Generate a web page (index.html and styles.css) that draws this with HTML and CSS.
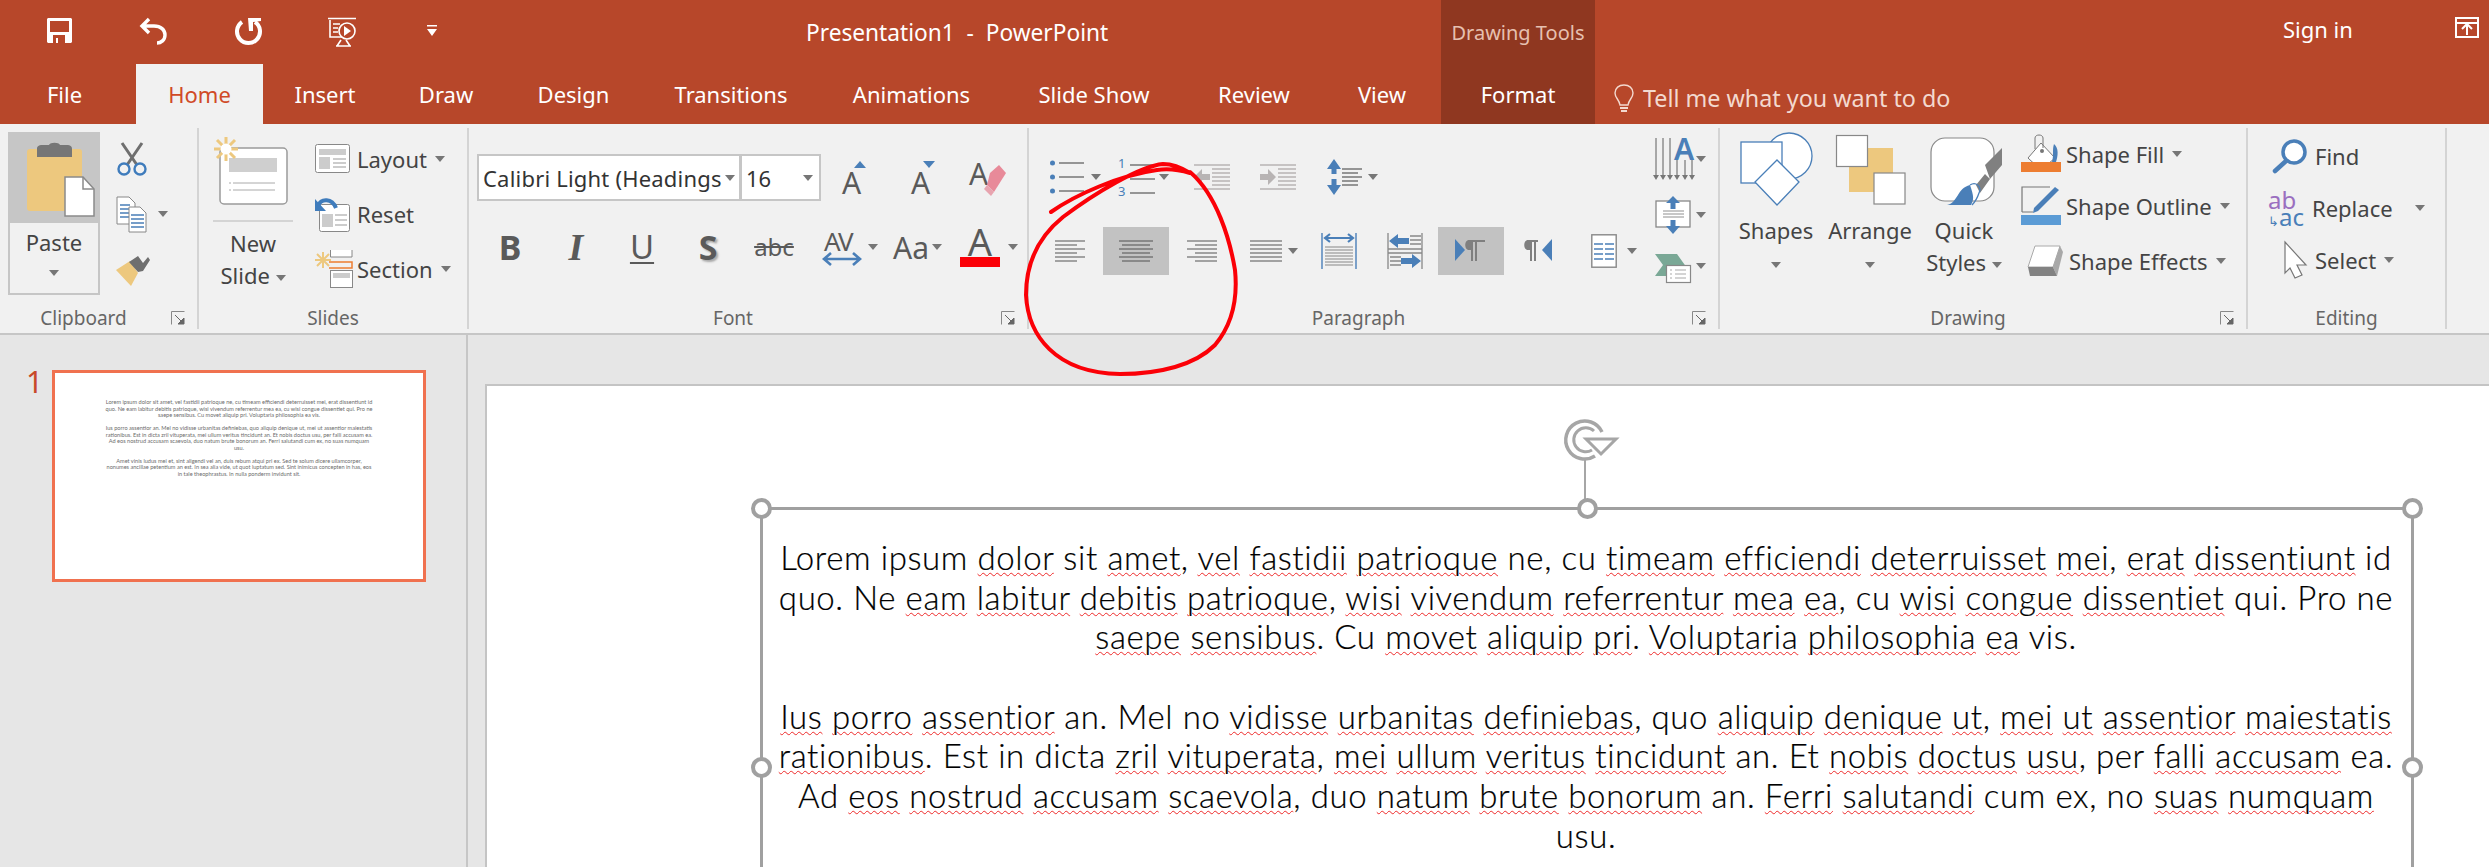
FILE: index.html
```html
<!DOCTYPE html>
<html>
<head>
  <title>Presentation1 - PowerPoint</title>
  <meta charset="UTF-8">
  <link rel="stylesheet" href="styles.css">
</head>
<body>
  <header class="titlebar">
    <div class="qat">
      <svg class="qat-save" width="25" height="26" viewBox="0 0 25 26"><path fill="#fff" fill-rule="evenodd" d="M1 1H24L25 2V25L24 26H1L0 25V2Z M3 4V15H22V4Z M6 18V26H9V21H11V26H18V18Z"/></svg>
      <svg class="qat-undo" width="28" height="28" viewBox="0 0 28 28"><path fill="none" stroke="#fff" stroke-width="3.4" d="M10 2L3 9L10 16M3 9H15C22 9 26 13 26 18C26 23 22 26 18 26"/></svg>
      <svg class="qat-redo" width="28" height="28" viewBox="0 0 28 28"><path fill="none" stroke="#fff" stroke-width="4" d="M8 5A11.500 11.500 0 1 0 21 5"/><path fill="#fff" d="M14 1H27V4L19 5V14H15Z"/></svg>
      <svg class="qat-show" width="30" height="30" viewBox="0 0 30 30"><g fill="none" stroke="#fff" stroke-width="1.6"><path d="M1 1.5H29M3 3V20H15M6 7H13M6 11H11M6 15H11"/><circle cx="20" cy="14" r="8"/><path d="M9 29H24M14 23L10 29M19 23L23 29"/></g><path fill="#fff" d="M17 9L24 14L17 19Z"/></svg>
      <svg class="qat-more" width="10" height="11" viewBox="0 0 10 11"><path fill="#fff" d="M0 0H10V1.6H0ZM0 4H10L5 11Z"/></svg>
    </div>
    <div class="doc-title">Presentation1  -  PowerPoint</div>
    <div class="ctx-head">Drawing Tools</div>
    <div class="signin">Sign in</div>
    <svg class="display-opts" width="24" height="21" viewBox="0 0 24 21"><path fill="none" stroke="#fff" stroke-width="2" d="M1 1H23V20H1ZM1 6H23M12 18V8M7 12L12 7L17 12"/></svg>
  </header>

  <nav class="tabs">
    <div class="tab tab-file">File</div>
    <div class="tab tab-active">Home</div>
    <div class="tab">Insert</div>
    <div class="tab">Draw</div>
    <div class="tab">Design</div>
    <div class="tab">Transitions</div>
    <div class="tab">Animations</div>
    <div class="tab">Slide Show</div>
    <div class="tab">Review</div>
    <div class="tab">View</div>
    <div class="tab tab-ctx">Format</div>
    <div class="tellme">
      <svg width="22" height="28" viewBox="0 0 22 28"><path fill="none" stroke="#f3d9cf" stroke-width="1.4" d="M7 21C6 15 2 14 2 9C2 4 6 1 11 1C16 1 20 4 20 9C20 14 16 15 15 21Z"/><path fill="#f3d9cf" d="M7 23H15V25H7ZM8 26H14V28H8Z"/></svg>
      <span>Tell me what you want to do</span>
    </div>
  </nav>

  <div class="ribbon">
    <section class="group g-clipboard">
      <div class="group-body">
        <div class="paste">
          <div class="paste-top">
            <svg width="68" height="76" viewBox="0 0 68 76"><rect x="0" y="8" width="55" height="62" rx="3" fill="#edc87e"/><path fill="#767676" d="M10 8C10 5 12 4 15 4H22C23 1 32 1 33 4H40C43 4 45 5 45 8V16H10Z"/><path fill="#fff" stroke="#8a8a8a" stroke-width="1.5" d="M38 36H56L67 48V75H38Z"/><path fill="none" stroke="#8a8a8a" stroke-width="1.5" d="M56 36V48H67"/></svg>
          </div>
          <div class="paste-bottom"><span>Paste</span><i class="caret"></i></div>
        </div>
        <div class="clip-tools">
          <div class="tool-row">
            <svg width="32" height="34" viewBox="0 0 32 34"><path fill="none" stroke="#6f6f6f" stroke-width="3" d="M6 1L21 23M26 1L11 23"/><g fill="none" stroke="#3f7cbc" stroke-width="2.4"><circle cx="8" cy="27" r="5.5"/><circle cx="24" cy="27" r="5.5"/></g></svg>
          </div>
          <div class="tool-row">
            <svg width="32" height="36" viewBox="0 0 32 36"><path fill="#fff" stroke="#888" d="M1 1H13L19 7V28H1Z"/><path stroke="#4a7fb8" stroke-width="1.5" d="M4 9H14M4 13H14M4 17H14M4 21H14"/><path fill="#fff" stroke="#888" d="M13 11H24L30 17V36H13Z"/><path stroke="#4a7fb8" stroke-width="1.5" d="M15 19H28M15 23H28M15 27H28M15 31H28"/></svg>
            <i class="caret caret-copy"></i>
          </div>
          <div class="tool-row">
            <svg width="34" height="30" viewBox="0 0 34 30"><path fill="#edc87e" d="M0 14L14 5L22 17L15 30Z"/><path fill="#6f6f6f" d="M13 6L22 0L27 7L32 1L34 4L27 15L22 16Z"/></svg>
          </div>
        </div>
      </div>
      <div class="group-label"><span>Clipboard</span><svg class="launcher" width="14" height="14" viewBox="0 0 14 14"><path fill="none" stroke="#888" d="M.5 13.5V.5H13.5"/><path stroke="#666" fill="#666" d="M4 4L11 11M13 7V13H7Z"/></svg></div>
    </section>

    <section class="group g-slides">
      <div class="group-body">
        <div class="new-slide">
          <svg width="76" height="68" viewBox="0 0 76 68"><rect x="7" y="11" width="67" height="56" rx="4" fill="#fff" stroke="#9a9a9a" stroke-width="1.5"/><rect x="16" y="21" width="48" height="14" fill="#cfcfcf"/><path stroke="#aaa" stroke-width="1" d="M20 46H62M20 53H62M16 46H18M16 53H18"/><g stroke="#edc87e" stroke-width="3"><path d="M13 0V24M1 12H25M4 3L22 21M22 3L4 21"/></g><circle cx="13" cy="12" r="5.5" fill="#fff"/></svg>
          <div class="new-slide-text">New<br>Slide <i class="caret"></i></div>
        </div>
        <div class="slide-tools">
          <div class="tool-row">
            <svg class="ico-36" width="36" height="30" viewBox="0 0 36 30"><rect x=".5" y=".5" width="34" height="28" rx="2" fill="#fff" stroke="#888"/><rect x="4" y="5" width="27" height="6" fill="#ccc"/><rect x="4" y="13" width="11" height="12" fill="#ccc"/><path stroke="#999" d="M18 15H31M18 19H31M18 23H31"/></svg>
            <span>Layout</span><i class="caret"></i>
          </div>
          <div class="tool-row">
            <svg class="ico-36" width="36" height="36" viewBox="0 0 36 36"><rect x="4.500" y="8.500" width="30" height="27" rx="2" fill="#fff" stroke="#888"/><rect x="7" y="18" width="11" height="13" fill="#ccc"/><path stroke="#999" d="M20 19H32M20 24H32M20 29H32"/><path fill="none" stroke="#3f7cbc" stroke-width="4" d="M3 10C6 2 17 2 21 12"/><path fill="#3f7cbc" d="M0 3V15H11Z"/></svg>
            <span>Reset</span>
          </div>
          <div class="tool-row">
            <svg class="ico-36" width="36" height="38" viewBox="0 0 36 38"><g stroke="#edc87e" stroke-width="2"><path d="M8 2V18M0 10H16M2 4L14 16M14 4L2 16"/></g><path fill="#fff" stroke="#888" d="M15.500 0V7H37V0"/><path stroke="#ed7d31" stroke-width="1.500" fill="none" d="M14 12H37V18H14"/><rect x="15.500" y="20.500" width="22" height="17" fill="#fff" stroke="#888"/><rect x="18" y="23" width="17" height="5" fill="#ccc"/></svg>
            <span>Section</span><i class="caret"></i>
          </div>
        </div>
      </div>
      <div class="group-label"><span>Slides</span></div>
    </section>

    <section class="group g-font">
      <div class="group-body">
        <div class="font-row1">
          <div class="combo combo-font"><span>Calibri Light (Headings</span><i class="caret"></i></div>
          <div class="combo combo-size"><span>16</span><i class="caret"></i></div>
          <svg class="grow" width="26" height="36" viewBox="0 0 26 36"><text x="0" y="34" class="glyph-a">A</text><path fill="#4a7fb8" d="M12 8L18 1L24 8Z"/></svg>
          <svg class="shrink" width="26" height="36" viewBox="0 0 26 36"><text x="0" y="34" class="glyph-a">A</text><path fill="#4a7fb8" d="M12 1H24L18 8Z"/></svg>
          <svg class="eraser" width="38" height="38" viewBox="0 0 38 38"><text x="0" y="26" class="glyph-a">A</text><path fill="#e88a99" d="M21 14L30 6L37 14L25 33L18 26Z"/><path fill="#e8a4af" d="M15 30L18 26L25 33L22 37Z"/></svg>
        </div>
        <div class="font-row2">
          <div class="fmt fmt-b">B</div>
          <div class="fmt fmt-i">I</div>
          <div class="fmt fmt-u">U</div>
          <div class="fmt fmt-s">S</div>
          <div class="fmt fmt-abc">abc</div>
          <div class="fmt fmt-av">
            <svg width="38" height="42" viewBox="0 0 38 42"><text x="1" y="25" class="glyph-av">AV</text><path fill="none" stroke="#4a7fb8" stroke-width="2.600" d="M1 33H37M8 27L1 33L8 39M30 27L37 33L30 39"/></svg>
            <i class="caret"></i>
          </div>
          <div class="fmt fmt-aa"><span>Aa</span><i class="caret"></i></div>
          <div class="fmt fmt-color">
            <div class="color-a"><span>A</span><b></b></div>
            <i class="caret"></i>
          </div>
        </div>
      </div>
      <div class="group-label"><span>Font</span><svg class="launcher" width="14" height="14" viewBox="0 0 14 14"><path fill="none" stroke="#888" d="M.5 13.5V.5H13.5"/><path stroke="#666" fill="#666" d="M4 4L11 11M13 7V13H7Z"/></svg></div>
    </section>

    <section class="group g-para">
      <div class="group-body">
        <div class="para-main">
          <div class="para-row1">
            <svg width="58" height="36" viewBox="0 0 58 36"><g fill="#4a7fb8"><circle cx="2.500" cy="4" r="2.500"/><circle cx="2.500" cy="18" r="2.500"/><circle cx="2.500" cy="32" r="2.500"/></g><path stroke="#777" stroke-width="1.500" d="M9 4H34M9 18H34M9 32H34"/><path fill="#777" d="M41 15H51L46 21Z"/></svg>
            <svg class="mnum" width="58" height="36" viewBox="0 0 58 36"><text x="0" y="9" class="glyph-n">1</text><text x="0" y="37" class="glyph-n">3</text><path stroke="#777" stroke-width="1.500" d="M12 6H37M12 20H37M12 34H37"/><path fill="#777" d="M41 15H51L46 21Z"/></svg>
            <svg class="indent-dec" width="36" height="26" viewBox="0 0 36 26"><path stroke="#b8b4b4" stroke-width="1.300" d="M0 1H36M18 5H36M18 9H36M18 13H36M18 17H36M18 21H36M0 25H36"/><path fill="#b8b4b4" d="M0 13L8 5V10H16V16H8V21Z"/></svg>
            <svg class="indent-inc" width="36" height="26" viewBox="0 0 36 26"><path stroke="#b8b4b4" stroke-width="1.300" d="M0 1H36M18 5H36M18 9H36M18 13H36M18 17H36M18 21H36M0 25H36"/><path fill="#b8b4b4" d="M16 13L8 5V10H0V16H8V21Z"/></svg>
            <svg class="spacing" width="52" height="36" viewBox="0 0 52 36"><path fill="#4a7fb8" d="M7 0L14 10H9.500V15H4.500V10H0ZM7 36L14 26H9.500V20H4.500V26H0Z"/><path stroke="#777" stroke-width="1.500" d="M15 10H35M15 14H31M15 18H35M15 22H31M15 26H31"/><path fill="#777" d="M41 15H51L46 21Z"/></svg>
          </div>
          <div class="para-row2">
            <div class="pbtn"><svg width="30" height="22" viewBox="0 0 30 22"><path stroke="#888" stroke-width="1.300" d="M0 1H30M0 5H22M0 9H30M0 13H22M0 17H30M0 21H22"/></svg></div>
            <div class="pbtn pbtn-on"><svg width="34" height="22" viewBox="0 0 34 22"><path stroke="#777" stroke-width="1.300" d="M0 1H34M3 5H31M0 9H34M3 13H31M0 17H34M3 21H31"/></svg></div>
            <div class="pbtn"><svg width="30" height="22" viewBox="0 0 30 22"><path stroke="#888" stroke-width="1.300" d="M0 1H30M8 5H30M0 9H30M8 13H30M0 17H30M8 21H30"/></svg></div>
            <div class="pbtn pbtn-just"><svg width="33" height="22" viewBox="0 0 33 22"><path stroke="#888" stroke-width="1.300" d="M0 1H32M0 5H32M0 9H32M0 13H32M0 17H32M0 21H32"/></svg><i class="caret"></i></div>
            <div class="pbtn"><svg width="36" height="36" viewBox="0 0 36 36"><path stroke="#4a7fb8" stroke-width="1.400" d="M1 0V36M35 0V36"/><path fill="none" stroke="#4a7fb8" stroke-width="2.200" d="M4 5H32M9 1L4 5L9 9M27 1L32 5L27 9"/><path stroke="#888" stroke-width="1.200" d="M4 14H32M4 17H32M4 20H32M4 23H32M4 26H32M4 29H32M4 32H32"/></svg></div>
            <div class="pbtn"><svg width="36" height="36" viewBox="0 0 36 36"><path stroke="#888" stroke-width="1.300" d="M1 0V36M35 0V36M23 3H34M23 7H34M23 11H34M1 16H35M1 20H35M3 24H14M3 28H14M3 32H14"/><path fill="#4a7fb8" d="M2 8L11 1V5H22V11H11V15ZM34 28L25 21V25H14V31H25V35Z"/></svg></div>
            <div class="pbtn pbtn-on"><svg width="32" height="24" viewBox="0 0 32 24"><path fill="#4a7fb8" d="M0 0L10 11L0 22Z"/><path fill="#7f7f7f" d="M22 1H14C9 1 9 11 14 11H16V22H18V3H20V22H22V3H30V1Z"/></svg></div>
            <div class="pbtn"><svg width="30" height="24" viewBox="0 0 30 24"><path fill="#7f7f7f" d="M14 1H6C1 1 1 11 6 11H8V22H10V3H12V22H14V3H16V1Z"/><path fill="#4a7fb8" d="M30 0L20 11L30 22Z"/></svg></div>
            <div class="pbtn pbtn-col"><svg width="26" height="34" viewBox="0 0 26 34"><rect x=".8" y=".8" width="24.400" height="32.400" fill="#fff" stroke="#888" stroke-width="1.400"/><path stroke="#4a7fb8" stroke-width="1.400" d="M3 10H12M14 10H23M3 15H12M14 15H23M3 20H12M14 20H23M3 25H12M14 25H23"/></svg><i class="caret"></i></div>
          </div>
        </div>
        <div class="para-side">
          <svg class="side-dir" width="55" height="44" viewBox="0 0 55 44"><path stroke="#777" stroke-width="1.200" d="M1 0V38M8 0V38M15 0V38M22 22V38M30 22V38M37 22V38"/><path fill="#777" d="M-2 37H4L1 42ZM5 37H11L8 42ZM12 37H18L15 42ZM19 37H25L22 42ZM27 37H33L30 42ZM34 37H40L37 42Z"/><text x="19" y="22" class="glyph-dir">A</text><path fill="#777" d="M41 18H51L46 24Z"/></svg>
          <svg class="side-align" width="55" height="40" viewBox="0 0 55 40"><rect x="1" y="6" width="34" height="26" fill="#fff" stroke="#888" stroke-width="1.300"/><path stroke="#b5b5b5" stroke-width="1.300" d="M8 16H29M8 19H29M8 22H29"/><path fill="#4a7fb8" d="M18 1L25 8H20.500V14H15.500V8H11ZM18 39L25 31H20.500V25H15.500V31H11Z"/><path fill="#777" d="M41 17H51L46 23Z"/></svg>
          <svg class="side-smart" width="55" height="30" viewBox="0 0 55 30"><path fill="#7aa896" d="M0 0H22L32 14L22 22H0L8 11Z"/><rect x="11.500" y="11.500" width="24" height="17" fill="#fff" stroke="#888" stroke-width="1.200"/><path stroke="#aaa" stroke-width="1.200" d="M20 16H31M20 20H31M20 24H31M15 16H17M15 20H17M15 24H17"/><path fill="#777" d="M41 9H51L46 15Z"/></svg>
        </div>
      </div>
      <div class="group-label"><span>Paragraph</span><svg class="launcher" width="14" height="14" viewBox="0 0 14 14"><path fill="none" stroke="#888" d="M.5 13.5V.5H13.5"/><path stroke="#666" fill="#666" d="M4 4L11 11M13 7V13H7Z"/></svg></div>
    </section>

    <section class="group g-draw">
      <div class="group-body">
        <div class="big-btn">
          <svg width="74" height="74" viewBox="0 0 74 74"><circle cx="50" cy="23" r="23" fill="#fff" stroke="#4a7fb8" stroke-width="1.300"/><rect x="2" y="9" width="41" height="41" fill="#fff" stroke="#4a7fb8" stroke-width="1.300"/><path fill="#fff" stroke="#4a7fb8" stroke-width="1.300" d="M38 27L60 49L38 72L16 49Z"/></svg>
          <div class="big-text">Shapes</div>
          <div class="big-text"><i class="caret"></i></div>
        </div>
        <div class="big-btn">
          <svg width="74" height="74" viewBox="0 0 74 74"><rect x="16" y="15" width="44" height="44" fill="#edc87e"/><rect x="3.500" y="2.500" width="31" height="31" fill="#fff" stroke="#888" stroke-width="1.200"/><rect x="41" y="40" width="31" height="31" fill="#fff" stroke="#888" stroke-width="1.200"/></svg>
          <div class="big-text">Arrange</div>
          <div class="big-text"><i class="caret"></i></div>
        </div>
        <div class="big-btn big-quick">
          <svg width="74" height="74" viewBox="0 0 74 74"><rect x="1" y="5" width="63" height="63" rx="14" fill="#fff" stroke="#888" stroke-width="1.200"/><path fill="#808080" d="M55 32L72 15V32L60 46ZM46 52L55 41L60 46L50 60Z"/><path fill="#4a7fb8" d="M17 72C28 70 27 55 40 52C44 64 44 66 41 72Z"/><path fill="none" stroke="#4a7fb8" stroke-width="1.300" d="M40 52C46 48 52 54 49 60C47 66 44 70 42 72"/></svg>
          <div class="big-text">Quick</div>
          <div class="big-text">Styles <i class="caret"></i></div>
        </div>
        <div class="shape-tools">
          <div class="tool-row">
            <svg class="ico-40" width="40" height="40" viewBox="0 0 40 40"><path fill="#fff" stroke="#777" d="M20 9L34 24L20 36L7 24Z"/><path fill="none" stroke="#777" d="M14 15V4C14 0 22 0 22 4V14"/><circle cx="21" cy="17" r="2" fill="#777"/><path fill="#4a7fb8" d="M33 10C38 14 37 22 35 28H31C33 20 31 16 33 10Z"/><rect x="0" y="28" width="40" height="10" fill="#ed7d31"/></svg>
            <span>Shape Fill</span><i class="caret"></i>
          </div>
          <div class="tool-row">
            <svg class="ico-40" width="40" height="40" viewBox="0 0 40 40"><path fill="none" stroke="#777" stroke-width="1.200" d="M1 26V1H29M1 26H12"/><path fill="#4a7fb8" d="M34 1L38 4L17 25L12 27L13 22Z"/><rect x="0" y="29" width="40" height="10" fill="#5b9bd5"/></svg>
            <span>Shape Outline</span><i class="caret"></i>
          </div>
          <div class="tool-row tool-effects">
            <svg width="36" height="32" viewBox="0 0 36 32"><path fill="#fff" stroke="#aaa" d="M8 1H33L26 22H1Z"/><path fill="#a8a8a8" d="M33 1L36 7L30 31L26 22Z"/><path fill="#828282" d="M1 22H26L30 31H3Z"/></svg>
            <span>Shape Effects</span><i class="caret"></i>
          </div>
        </div>
      </div>
      <div class="group-label"><span>Drawing</span><svg class="launcher" width="14" height="14" viewBox="0 0 14 14"><path fill="none" stroke="#888" d="M.5 13.5V.5H13.5"/><path stroke="#666" fill="#666" d="M4 4L11 11M13 7V13H7Z"/></svg></div>
    </section>

    <section class="group g-edit">
      <div class="group-body">
        <div class="edit-tools">
          <div class="tool-row">
            <svg class="ico-find" width="36" height="36" viewBox="0 0 36 36"><circle cx="22" cy="14" r="11" fill="#fff" stroke="#4a7fb8" stroke-width="3.500"/><path stroke="#4a7fb8" stroke-width="4.500" stroke-linecap="round" d="M14 23L3 33"/></svg>
            <span>Find</span>
          </div>
          <div class="tool-row">
            <div class="abac"><span class="ab">ab</span><span class="ac"><em>↳</em>ac</span></div>
            <span>Replace</span><i class="caret caret-wide"></i>
          </div>
          <div class="tool-row">
            <svg class="ico-find" width="36" height="38" viewBox="0 0 36 38"><path fill="#fff" stroke="#777" stroke-width="1.200" d="M13 1L34 24L25 24L30 34L23 37L18 27L13 32Z"/></svg>
            <span>Select</span><i class="caret"></i>
          </div>
        </div>
      </div>
      <div class="group-label"><span>Editing</span></div>
    </section>
  </div>

  <main class="workspace">
    <aside class="pane">
      <div class="thumb-num">1</div>
      <div class="thumb">
        <p>Lorem ipsum dolor sit amet, vel fastidii patrioque ne, cu timeam efficiendi deterruisset mei, erat dissentiunt id<br>quo. Ne eam labitur debitis patrioque, wisi vivendum referrentur mea ea, cu wisi congue dissentiet qui. Pro ne<br>saepe sensibus. Cu movet aliquip pri. Voluptaria philosophia ea vis.</p>
        <p>Ius porro assentior an. Mel no vidisse urbanitas definiebas, quo aliquip denique ut, mei ut assentior maiestatis<br>rationibus. Est in dicta zril vituperata, mei ullum veritus tincidunt an. Et nobis doctus usu, per falli accusam ea.<br>Ad eos nostrud accusam scaevola, duo natum brute bonorum an. Ferri salutandi cum ex, no suas numquam<br>usu.</p>
        <p>Amet vinis ludus mei et, sint aligendi vel an, duis rebum atqui pri ex. Sed te solum dicere ullamcorper,<br>nonumes ancillae petentium an est. In sea alia vide, ut quot luptatum sed. Sint inimicus concepten in has, eos<br>in tale theophrastus. In nulla ponderm invidunt sit.</p>
      </div>
    </aside>
    <div class="canvas">
      <div class="slide">
        <div class="textbox">
          <svg class="rotate" width="54" height="80" viewBox="0 0 54 80"><g fill="none" stroke="#a6a6a6"><path stroke-width="3.500" d="M29 35A19 19 0 1 1 36 11"/><path stroke-width="3" d="M26 29A12 12 0 1 1 28 10"/><path fill="#fff" stroke-width="3" stroke-linejoin="miter" d="M20 18H50L35 33Z"/><path stroke-width="2" d="M19 39V83"/></g></svg>
          <i class="handle h-tl"></i><i class="handle h-tc"></i><i class="handle h-tr"></i>
          <i class="handle h-ml"></i><i class="handle h-mr"></i>
          <div class="line">Lorem ipsum <u>dolor</u> sit <u>amet</u>, <u>vel</u> <u>fastidii</u> <u>patrioque</u> ne, cu <u>timeam</u> <u>efficiendi</u> <u>deterruisset</u> <u>mei</u>, <u>erat</u> <u>dissentiunt</u> id</div>
          <div class="line">quo. Ne <u>eam</u> <u>labitur</u> <u>debitis</u> <u>patrioque</u>, <u>wisi</u> <u>vivendum</u> <u>referrentur</u> <u>mea</u> <u>ea</u>, cu <u>wisi</u> <u>congue</u> <u>dissentiet</u> qui. Pro ne</div>
          <div class="line"><u>saepe</u> <u>sensibus</u>. Cu <u>movet</u> <u>aliquip</u> <u>pri</u>. <u>Voluptaria</u> <u>philosophia</u> <u>ea</u> vis.</div>
          <div class="line">&nbsp;</div>
          <div class="line"><u>Ius</u> <u>porro</u> <u>assentior</u> an. Mel no <u>vidisse</u> <u>urbanitas</u> <u>definiebas</u>, quo <u>aliquip</u> <u>denique</u> <u>ut</u>, <u>mei</u> <u>ut</u> <u>assentior</u> <u>maiestatis</u></div>
          <div class="line"><u>rationibus</u>. Est in dicta <u>zril</u> <u>vituperata</u>, <u>mei</u> <u>ullum</u> <u>veritus</u> <u>tincidunt</u> an. Et <u>nobis</u> <u>doctus</u> <u>usu</u>, per <u>falli</u> <u>accusam</u> ea.</div>
          <div class="line">Ad <u>eos</u> <u>nostrud</u> <u>accusam</u> <u>scaevola</u>, duo <u>natum</u> <u>brute</u> <u>bonorum</u> an. <u>Ferri</u> <u>salutandi</u> cum ex, no <u>suas</u> <u>numquam</u></div>
          <div class="line">usu.</div>
        </div>
      </div>
    </div>
  </main>

  <svg class="ink" width="2489" height="867" viewBox="0 0 2489 867"><path fill="none" stroke="#fb0007" stroke-width="4" stroke-linecap="round" stroke-linejoin="round" d="M1051 212C1075 195 1120 175 1157 170C1170 168 1180 170 1190 173C1182 168 1172 164 1163 164C1140 166 1095 193 1063 217C1042 234 1026 258 1026 295C1028 335 1055 373 1120 374C1160 374 1195 365 1215 345C1232 325 1238 300 1235 270C1230 240 1217 195 1190 172"/></svg>
</body>
</html>
```
FILE: styles.css
```css
* {
  box-sizing: border-box;
}
html, body {
  margin: 0;
  height: 867px;
  overflow: hidden;
}
body {
  font-family: "Noto Sans", sans-serif;
  font-size: 22px;
  color: #444;
  background-color: #e6e6e6;
  position: relative;
}
svg {
  display: block;
  flex: none;
  overflow: visible;
}
.caret {
  display: inline-block;
  width: 0;
  height: 0;
  border-left: 5px solid transparent;
  border-right: 5px solid transparent;
  border-top: 6px solid #767676;
  vertical-align: middle;
  flex: none;
}

/* barra de titulo */
.titlebar {
  height: 64px;
  background-color: #b7472a;
  color: #fff;
  display: flex;
  align-items: stretch;
}
.qat {
  display: flex;
  align-items: flex-start;
  width: 806px;
  padding: 17px 0 0 47px;
}
.qat-undo { margin-left: 67px; }
.qat-redo { margin-left: 67px; }
.qat-show { margin-left: 65px; }
.qat-more { margin: 8px 0 0 70px; }
.doc-title {
  width: 302px;
  padding-top: 2px;
  line-height: 62px;
  font-size: 22.700px;
  white-space: pre;
  text-align: center;
}
.ctx-head {
  margin-left: 333px;
  width: 154px;
  padding-top: 2px;
  background-color: #8f3720;
  color: #e6c0b0;
  font-size: 20px;
  line-height: 62px;
  text-align: center;
}
.signin {
  margin-left: 688px;
  width: 73px;
  line-height: 58px;
  white-space: nowrap;
}
.display-opts {
  margin: 17px 0 0 99px;
}

/* pestañas */
.tabs {
  height: 60px;
  background-color: #b7472a;
  color: #fff;
  display: grid;
  grid-template-columns: 121px 127px 124px 118px 137px 178px 183px 182px 138px 118px 154px auto;
  padding-left: 15px;
}
.tab {
  text-align: center;
  line-height: 60px;
}
.tab-file {
  padding-right: 22px;
}
.tab-active {
  background-color: #f1f1f1;
  color: #d04a27;
}
.tab-ctx {
  background-color: #8f3720;
}
.tellme {
  display: flex;
  align-items: center;
  padding: 8px 0 0 18px;
  color: #f3d9cf;
  font-size: 23.300px;
}
.tellme span {
  margin-left: 8px;
  white-space: nowrap;
}

/* cinta */
.ribbon {
  height: 211px;
  padding-top: 4px;
  background-color: #f1f1f1;
  border-bottom: 2px solid #c6c6c6;
  display: flex;
}
.group {
  height: 201px;
  border-right: 2px solid #d4d4d4;
  display: flex;
  flex-direction: column;
  flex: none;
}
.g-clipboard { width: 199px; }
.g-slides { width: 270px; }
.g-font { width: 560px; }
.g-para { width: 691px; }
.g-draw { width: 528px; }
.g-edit { width: 199px; }
.group-body {
  flex: 1;
  display: flex;
  min-height: 0;
}
.group-label {
  height: 26px;
  display: flex;
  align-items: center;
  font-size: 19px;
  color: #666;
  margin-bottom: -2px;
}
.group-label span {
  flex: 1;
  text-align: center;
}
.launcher {
  margin: 0 12px 0 4px;
}
.tool-row {
  display: flex;
  align-items: center;
  white-space: nowrap;
}
.tool-row .caret {
  margin-left: 8px;
}

/* portapapeles */
.g-clipboard .group-body {
  padding: 4px 0 0 8px;
}
.paste {
  width: 92px;
  height: 163px;
}
.paste-top {
  height: 91px;
  background-color: #c6c6c6;
  padding: 9px 0 0 19px;
}
.paste-bottom {
  height: 72px;
  border: 2px solid #c6c6c6;
  border-top: 0;
  display: flex;
  flex-direction: column;
  align-items: center;
}
.paste-bottom span {
  line-height: 38px;
}
.paste-bottom .caret {
  margin-top: 9px;
}
.clip-tools {
  padding: 0 0 0 16px;
  display: grid;
  grid-template-rows: 54px 56px 58px;
  align-content: start;
}
.clip-tools .caret-copy {
  margin-left: 10px;
}

/* diapositivas */
.g-slides .group-body {
  padding: 3px 0 0 14px;
}
.new-slide {
  width: 80px;
  text-align: center;
  padding-top: 3px;
}
.new-slide svg {
  margin-top: 3px;
}
.new-slide-text {
  margin-top: 15px;
  border-top: 2px solid #d4d4d4;
  padding-top: 5px;
  line-height: 32px;
}
.slide-tools {
  margin-left: 22px;
  display: grid;
  grid-template-rows: 55px 55px 55px;
  align-content: start;
}
.ico-36 {
  margin-right: 6px;
}

/* fuente */
.g-font .group-body {
  flex-direction: column;
  padding: 26px 0 0 8px;
}
.font-row1 {
  display: flex;
  align-items: center;
  height: 47px;
}
.combo {
  height: 47px;
  background-color: #fff;
  border: 2px solid #c6c6c6;
  display: flex;
  align-items: center;
  justify-content: space-between;
  padding: 0 4px;
  color: #333;
}
.combo-font {
  width: 264px;
  white-space: nowrap;
  letter-spacing: .2px;
  overflow: hidden;
}
.combo-size {
  width: 81px;
  margin-left: -1px;
  padding-right: 6px;
}
.grow { margin: 0 0 0 21px; }
.shrink { margin-left: 43px; }
.eraser { margin-left: 32px; }
.glyph-a {
  font-size: 30px;
  fill: #5a5a5a;
}
.glyph-av {
  font-size: 26px;
  fill: #5a5a5a;
  letter-spacing: -1.500px;
}
.glyph-n {
  font-size: 13px;
  fill: #4a7fb8;
}
.glyph-dir {
  font-size: 30px;
  font-weight: 600;
  fill: #4a7fb8;
}
.font-row2 {
  display: flex;
  align-items: center;
  margin-top: 24px;
  height: 44px;
}
.fmt {
  width: 66px;
  text-align: center;
  color: #5a5a5a;
  flex: none;
}
.fmt-b {
  font-size: 34px;
  font-weight: 700;
  line-height: 44px;
}
.fmt-i {
  font-family: "Liberation Serif", serif;
  font-style: italic;
  font-weight: 700;
  font-size: 38px;
  line-height: 44px;
}
.fmt-u {
  font-size: 33px;
  line-height: 44px;
  text-decoration: underline;
  text-decoration-thickness: 2px;
  text-underline-offset: 3px;
}
.fmt-s {
  font-size: 34px;
  font-weight: 700;
  line-height: 44px;
  text-shadow: 2px 2px 2px #aaa;
}
.fmt-abc {
  font-size: 24px;
  text-decoration: line-through;
  line-height: 44px;
}
.fmt-av {
  width: 74px;
  display: flex;
  align-items: center;
  padding-left: 16px;
  gap: 7px;
}
.fmt-aa {
  width: 65px;
  font-size: 30px;
  display: flex;
  align-items: center;
  gap: 3px;
  padding-left: 12px;
}
.fmt-color {
  width: 80px;
  display: flex;
  align-items: center;
  padding-left: 14px;
  gap: 8px;
}
.color-a {
  width: 40px;
  text-align: center;
  font-size: 38px;
  line-height: 32px;
  height: 44px;
}
.color-a b {
  display: block;
  height: 10px;
  background-color: #fb0007;
}

/* parrafo */
.para-main {
  width: 626px;
}
.para-row1 {
  display: flex;
  align-items: flex-start;
  padding: 31px 0 0 21px;
  height: 67px;
}
.mnum { margin-left: 10px; }
.indent-dec { margin: 5px 0 0 18px; }
.indent-inc { margin: 5px 0 0 30px; }
.spacing { margin-left: 31px; }
.para-row2 {
  display: flex;
  align-items: center;
  padding-left: 8px;
  margin-top: 32px;
}
.pbtn {
  width: 66px;
  height: 48px;
  display: flex;
  align-items: center;
  justify-content: center;
  flex: none;
}
.pbtn-on {
  background-color: #c2c2c2;
}
.pbtn-just {
  width: 71px;
  gap: 5px;
  padding-left: 6px;
}
.pbtn-col {
  margin-left: 5px;
  gap: 10px;
  padding-left: 12px;
}
.para-side {
  padding: 10px 0 0 0;
  display: flex;
  flex-direction: column;
}
.side-align { margin-top: 13px; }
.side-smart { margin-top: 19px; }

/* dibujo */
.g-draw .group-body {
  padding: 0 0 0 9px;
  margin-top: -2px;
}
.big-btn {
  width: 94px;
  display: flex;
  flex-direction: column;
  align-items: center;
}
.big-btn svg {
  margin: 7px 0 7px;
}
.big-quick svg {
  margin-left: 6px;
}
.big-text {
  height: 32px;
  line-height: 32px;
}
.shape-tools {
  margin-left: 10px;
  display: grid;
  grid-template-rows: 52px 52px 58px;
  align-content: start;
  padding-top: 2px;
}
.ico-40 {
  margin-right: 5px;
}
.tool-effects svg {
  margin: 0 6px 0 6px;
}

/* edicion */
.g-edit .group-body {
  padding: 2px 0 0 20px;
}
.edit-tools {
  display: grid;
  grid-template-rows: 52px 52px 52px;
  align-content: start;
}
.ico-find {
  margin: 0 7px 0 4px;
}
.abac {
  width: 44px;
  height: 36px;
  position: relative;
  line-height: 1;
}
.ab {
  position: absolute;
  left: 0;
  top: -2px;
  color: #9a6fc0;
  font-size: 24px;
}
.ac {
  position: absolute;
  left: 0;
  top: 15px;
  color: #4a7fb8;
  font-size: 24px;
}
.ac em {
  font-style: normal;
  font-size: 13px;
}
.tool-row .caret-wide {
  margin-left: 22px;
}

/* area de trabajo */
.workspace {
  display: flex;
  height: 532px;
  overflow: hidden;
}
.pane {
  width: 468px;
  border-right: 2px solid #c6c6c6;
  display: flex;
  align-items: flex-start;
  padding: 35px 0 0 26px;
  flex: none;
}
.thumb-num {
  font-size: 30px;
  line-height: 24px;
  color: #c8492a;
  width: 26px;
}
.thumb {
  width: 374px;
  height: 212px;
  background-color: #fff;
  border: 3px solid #f0714f;
  padding: 26px 20px 0;
  text-align: center;
  font-family: "Lato", sans-serif;
  font-size: 5.600px;
  line-height: 6.500px;
  color: #6c6c6c;
  white-space: nowrap;
}
.thumb p {
  margin: 0 0 6.500px;
}
.canvas {
  flex: 1;
  padding: 49px 0 0 17px;
}
.slide {
  height: 483px;
  background-color: #fff;
  border-top: 2px solid #c4c4c4;
  border-left: 2px solid #c4c4c4;
  position: relative;
}
.textbox {
  position: absolute;
  left: 273px;
  top: 121px;
  width: 1654px;
  height: 360px;
  border: 3px solid #a0a0a0;
  border-bottom: 0;
  padding: 28px 2px 0 0;
  font-family: "Lato", sans-serif;
  font-weight: 300;
  font-size: 33px;
  letter-spacing: .6px;
  -webkit-text-stroke: .2px #000;
  color: #000;
  text-align: center;
}
.line {
  height: 39.700px;
  line-height: 39.700px;
  white-space: nowrap;
}
.line u {
  text-decoration: underline wavy #ee2a2a;
  text-decoration-thickness: 1px;
  text-underline-offset: 2px;
}
.handle {
  position: absolute;
  width: 21px;
  height: 21px;
  border-radius: 50%;
  background-color: #fff;
  border: 4px solid #a0a0a0;
}
.h-tl { left: -12px; top: -12px; }
.h-tc { left: 814px; top: -12px; }
.h-tr { right: -12px; top: -12px; }
.h-ml { left: -12px; top: 247px; }
.h-mr { right: -12px; top: 247px; }
.rotate {
  position: absolute;
  left: 803px;
  top: -89px;
}

/* trazo a mano encima */
.ink {
  position: absolute;
  left: 0;
  top: 0;
  pointer-events: none;
}
```
